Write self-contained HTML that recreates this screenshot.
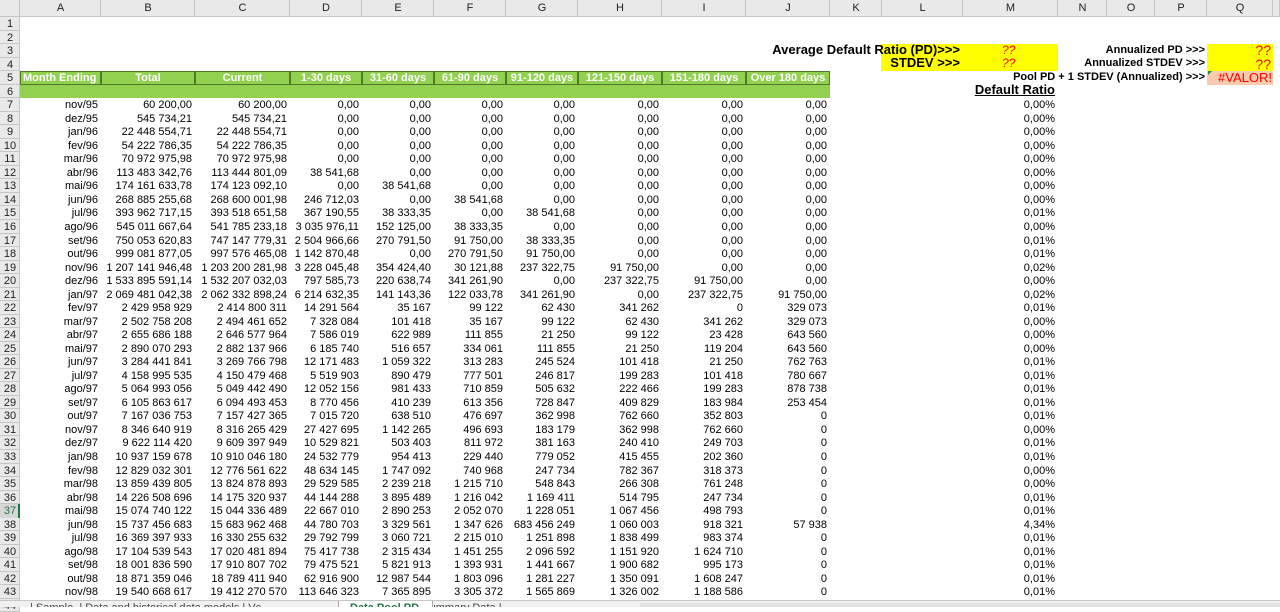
<!DOCTYPE html>
<html><head><meta charset="utf-8"><style>
*{margin:0;padding:0;box-sizing:border-box}
body{width:1280px;height:607px;overflow:hidden;background:#fff;font-family:"Liberation Sans",Arial,sans-serif;font-size:11px;color:#000;position:relative}
.g{display:grid;grid-template-columns:20px 81px 94px 95px 72px 72px 72px 72px 84px 84px 84px 52px 81px 95px 49px 48px 52px 66px 7px;grid-template-rows:17px repeat(44,13.54px);width:1280px}
.g>*{font-style:normal;font-weight:normal;white-space:nowrap;overflow:hidden;line-height:15px;text-align:right;padding-right:3px}
.g>b{grid-column:1;background:#e9e9e9;text-align:center;padding:0;box-shadow:inset -1px -1px 0 #c6c6c6;color:#222;line-height:14px}
.g>.h{background:#e9e9e9;text-align:center;padding:0;line-height:17px;box-shadow:inset -1px -1px 0 #c6c6c6;color:#222;font-size:11px}
.g>.m{grid-column:14}
.gr{background:#92d050;color:#fff;font-weight:bold!important;text-align:center!important;padding:0!important;border:1px solid #4f7a28;line-height:12.5px!important}
.ab{position:absolute;font-weight:bold;white-space:nowrap}
</style></head><body>
<div class="g">
<div class="h"></div><div class="h">A</div><div class="h">B</div><div class="h">C</div><div class="h">D</div><div class="h">E</div><div class="h">F</div><div class="h">G</div><div class="h">H</div><div class="h">I</div><div class="h">J</div><div class="h">K</div><div class="h">L</div><div class="h">M</div><div class="h">N</div><div class="h">O</div><div class="h">P</div><div class="h">Q</div><div class="h"></div>
<b>1</b><b>2</b><b>3</b><b>4</b>
<b>5</b><i class="gr" style="text-align:left!important;padding-left:2px!important">Month Ending</i><i class="gr">Total</i><i class="gr">Current</i><i class="gr">1-30 days</i><i class="gr">31-60 days</i><i class="gr">61-90 days</i><i class="gr">91-120 days</i><i class="gr">121-150 days</i><i class="gr">151-180 days</i><i class="gr">Over 180 days</i>
<b>6</b><i style="grid-column:2/12;background:#92d050"></i>
<b>7</b><i>nov/95</i><i>60 200,00</i><i>60 200,00</i><i>0,00</i><i>0,00</i><i>0,00</i><i>0,00</i><i>0,00</i><i>0,00</i><i>0,00</i><i class="m">0,00%</i>
<b>8</b><i>dez/95</i><i>545 734,21</i><i>545 734,21</i><i>0,00</i><i>0,00</i><i>0,00</i><i>0,00</i><i>0,00</i><i>0,00</i><i>0,00</i><i class="m">0,00%</i>
<b>9</b><i>jan/96</i><i>22 448 554,71</i><i>22 448 554,71</i><i>0,00</i><i>0,00</i><i>0,00</i><i>0,00</i><i>0,00</i><i>0,00</i><i>0,00</i><i class="m">0,00%</i>
<b>10</b><i>fev/96</i><i>54 222 786,35</i><i>54 222 786,35</i><i>0,00</i><i>0,00</i><i>0,00</i><i>0,00</i><i>0,00</i><i>0,00</i><i>0,00</i><i class="m">0,00%</i>
<b>11</b><i>mar/96</i><i>70 972 975,98</i><i>70 972 975,98</i><i>0,00</i><i>0,00</i><i>0,00</i><i>0,00</i><i>0,00</i><i>0,00</i><i>0,00</i><i class="m">0,00%</i>
<b>12</b><i>abr/96</i><i>113 483 342,76</i><i>113 444 801,09</i><i>38 541,68</i><i>0,00</i><i>0,00</i><i>0,00</i><i>0,00</i><i>0,00</i><i>0,00</i><i class="m">0,00%</i>
<b>13</b><i>mai/96</i><i>174 161 633,78</i><i>174 123 092,10</i><i>0,00</i><i>38 541,68</i><i>0,00</i><i>0,00</i><i>0,00</i><i>0,00</i><i>0,00</i><i class="m">0,00%</i>
<b>14</b><i>jun/96</i><i>268 885 255,68</i><i>268 600 001,98</i><i>246 712,03</i><i>0,00</i><i>38 541,68</i><i>0,00</i><i>0,00</i><i>0,00</i><i>0,00</i><i class="m">0,00%</i>
<b>15</b><i>jul/96</i><i>393 962 717,15</i><i>393 518 651,58</i><i>367 190,55</i><i>38 333,35</i><i>0,00</i><i>38 541,68</i><i>0,00</i><i>0,00</i><i>0,00</i><i class="m">0,01%</i>
<b>16</b><i>ago/96</i><i>545 011 667,64</i><i>541 785 233,18</i><i>3 035 976,11</i><i>152 125,00</i><i>38 333,35</i><i>0,00</i><i>0,00</i><i>0,00</i><i>0,00</i><i class="m">0,00%</i>
<b>17</b><i>set/96</i><i>750 053 620,83</i><i>747 147 779,31</i><i>2 504 966,66</i><i>270 791,50</i><i>91 750,00</i><i>38 333,35</i><i>0,00</i><i>0,00</i><i>0,00</i><i class="m">0,01%</i>
<b>18</b><i>out/96</i><i>999 081 877,05</i><i>997 576 465,08</i><i>1 142 870,48</i><i>0,00</i><i>270 791,50</i><i>91 750,00</i><i>0,00</i><i>0,00</i><i>0,00</i><i class="m">0,01%</i>
<b>19</b><i>nov/96</i><i>1 207 141 946,48</i><i>1 203 200 281,98</i><i>3 228 045,48</i><i>354 424,40</i><i>30 121,88</i><i>237 322,75</i><i>91 750,00</i><i>0,00</i><i>0,00</i><i class="m">0,02%</i>
<b>20</b><i>dez/96</i><i>1 533 895 591,14</i><i>1 532 207 032,03</i><i>797 585,73</i><i>220 638,74</i><i>341 261,90</i><i>0,00</i><i>237 322,75</i><i>91 750,00</i><i>0,00</i><i class="m">0,00%</i>
<b>21</b><i>jan/97</i><i>2 069 481 042,38</i><i>2 062 332 898,24</i><i>6 214 632,35</i><i>141 143,36</i><i>122 033,78</i><i>341 261,90</i><i>0,00</i><i>237 322,75</i><i>91 750,00</i><i class="m">0,02%</i>
<b>22</b><i>fev/97</i><i>2 429 958 929</i><i>2 414 800 311</i><i>14 291 564</i><i>35 167</i><i>99 122</i><i>62 430</i><i>341 262</i><i>0</i><i>329 073</i><i class="m">0,01%</i>
<b>23</b><i>mar/97</i><i>2 502 758 208</i><i>2 494 461 652</i><i>7 328 084</i><i>101 418</i><i>35 167</i><i>99 122</i><i>62 430</i><i>341 262</i><i>329 073</i><i class="m">0,00%</i>
<b>24</b><i>abr/97</i><i>2 655 686 188</i><i>2 646 577 964</i><i>7 586 019</i><i>622 989</i><i>111 855</i><i>21 250</i><i>99 122</i><i>23 428</i><i>643 560</i><i class="m">0,00%</i>
<b>25</b><i>mai/97</i><i>2 890 070 293</i><i>2 882 137 966</i><i>6 185 740</i><i>516 657</i><i>334 061</i><i>111 855</i><i>21 250</i><i>119 204</i><i>643 560</i><i class="m">0,00%</i>
<b>26</b><i>jun/97</i><i>3 284 441 841</i><i>3 269 766 798</i><i>12 171 483</i><i>1 059 322</i><i>313 283</i><i>245 524</i><i>101 418</i><i>21 250</i><i>762 763</i><i class="m">0,01%</i>
<b>27</b><i>jul/97</i><i>4 158 995 535</i><i>4 150 479 468</i><i>5 519 903</i><i>890 479</i><i>777 501</i><i>246 817</i><i>199 283</i><i>101 418</i><i>780 667</i><i class="m">0,01%</i>
<b>28</b><i>ago/97</i><i>5 064 993 056</i><i>5 049 442 490</i><i>12 052 156</i><i>981 433</i><i>710 859</i><i>505 632</i><i>222 466</i><i>199 283</i><i>878 738</i><i class="m">0,01%</i>
<b>29</b><i>set/97</i><i>6 105 863 617</i><i>6 094 493 453</i><i>8 770 456</i><i>410 239</i><i>613 356</i><i>728 847</i><i>409 829</i><i>183 984</i><i>253 454</i><i class="m">0,01%</i>
<b>30</b><i>out/97</i><i>7 167 036 753</i><i>7 157 427 365</i><i>7 015 720</i><i>638 510</i><i>476 697</i><i>362 998</i><i>762 660</i><i>352 803</i><i>0</i><i class="m">0,01%</i>
<b>31</b><i>nov/97</i><i>8 346 640 919</i><i>8 316 265 429</i><i>27 427 695</i><i>1 142 265</i><i>496 693</i><i>183 179</i><i>362 998</i><i>762 660</i><i>0</i><i class="m">0,00%</i>
<b>32</b><i>dez/97</i><i>9 622 114 420</i><i>9 609 397 949</i><i>10 529 821</i><i>503 403</i><i>811 972</i><i>381 163</i><i>240 410</i><i>249 703</i><i>0</i><i class="m">0,01%</i>
<b>33</b><i>jan/98</i><i>10 937 159 678</i><i>10 910 046 180</i><i>24 532 779</i><i>954 413</i><i>229 440</i><i>779 052</i><i>415 455</i><i>202 360</i><i>0</i><i class="m">0,01%</i>
<b>34</b><i>fev/98</i><i>12 829 032 301</i><i>12 776 561 622</i><i>48 634 145</i><i>1 747 092</i><i>740 968</i><i>247 734</i><i>782 367</i><i>318 373</i><i>0</i><i class="m">0,00%</i>
<b>35</b><i>mar/98</i><i>13 859 439 805</i><i>13 824 878 893</i><i>29 529 585</i><i>2 239 218</i><i>1 215 710</i><i>548 843</i><i>266 308</i><i>761 248</i><i>0</i><i class="m">0,00%</i>
<b>36</b><i>abr/98</i><i>14 226 508 696</i><i>14 175 320 937</i><i>44 144 288</i><i>3 895 489</i><i>1 216 042</i><i>1 169 411</i><i>514 795</i><i>247 734</i><i>0</i><i class="m">0,01%</i>
<b style="background:#d6d6d6;color:#217346;box-shadow:inset -2px 0 0 #217346">37</b><i>mai/98</i><i>15 074 740 122</i><i>15 044 336 489</i><i>22 667 010</i><i>2 890 253</i><i>2 052 070</i><i>1 228 051</i><i>1 067 456</i><i>498 793</i><i>0</i><i class="m">0,01%</i>
<b>38</b><i>jun/98</i><i>15 737 456 683</i><i>15 683 962 468</i><i>44 780 703</i><i>3 329 561</i><i>1 347 626</i><i>683 456 249</i><i>1 060 003</i><i>918 321</i><i>57 938</i><i class="m">4,34%</i>
<b>39</b><i>jul/98</i><i>16 369 397 933</i><i>16 330 255 632</i><i>29 792 799</i><i>3 060 721</i><i>2 215 010</i><i>1 251 898</i><i>1 838 499</i><i>983 374</i><i>0</i><i class="m">0,01%</i>
<b>40</b><i>ago/98</i><i>17 104 539 543</i><i>17 020 481 894</i><i>75 417 738</i><i>2 315 434</i><i>1 451 255</i><i>2 096 592</i><i>1 151 920</i><i>1 624 710</i><i>0</i><i class="m">0,01%</i>
<b>41</b><i>set/98</i><i>18 001 836 590</i><i>17 910 807 702</i><i>79 475 521</i><i>5 821 913</i><i>1 393 931</i><i>1 441 667</i><i>1 900 682</i><i>995 173</i><i>0</i><i class="m">0,01%</i>
<b>42</b><i>out/98</i><i>18 871 359 046</i><i>18 789 411 940</i><i>62 916 900</i><i>12 987 544</i><i>1 803 096</i><i>1 281 227</i><i>1 350 091</i><i>1 608 247</i><i>0</i><i class="m">0,01%</i>
<b>43</b><i>nov/98</i><i>19 540 668 617</i><i>19 412 270 570</i><i>113 646 323</i><i>7 365 895</i><i>3 305 372</i><i>1 565 869</i><i>1 326 002</i><i>1 188 586</i><i>0</i><i class="m">0,01%</i>
<b>44</b>
</div>

<div style="position:absolute;left:881px;top:44px;width:177px;height:27px;background:#ffff00"></div>
<div style="position:absolute;left:1207px;top:44px;width:66px;height:27px;background:#ffff00"></div>
<div style="position:absolute;left:1207px;top:71px;width:66px;height:14px;background:#f8cbad"></div>
<div style="position:absolute;left:1208px;top:71px;width:0;height:0;border-top:4px solid #1e8a3a;border-right:4px solid transparent"></div>

<div class="ab" style="right:320px;top:42px;font-size:13px;line-height:15px">Average Default Ratio (PD)&gt;&gt;&gt;</div>
<div class="ab" style="right:320px;top:55px;font-size:13px;line-height:15px">STDEV &gt;&gt;&gt;</div>
<div class="ab" style="left:1002px;top:43px;font-size:12px;line-height:14px;color:#ff0000;font-weight:normal;font-style:italic">??</div>
<div class="ab" style="left:1002px;top:56px;font-size:12px;line-height:14px;color:#ff0000;font-weight:normal;font-style:italic">??</div>
<div class="ab" style="right:75px;top:44px;font-size:11px;line-height:13px">Annualized PD &gt;&gt;&gt;</div>
<div class="ab" style="right:75px;top:57px;font-size:11px;line-height:13px">Annualized STDEV &gt;&gt;&gt;</div>
<div class="ab" style="right:75px;top:71px;font-size:11px;line-height:13px">Pool PD + 1 STDEV (Annualized) &gt;&gt;&gt;</div>
<div class="ab" style="right:9px;top:42px;font-size:14px;line-height:16px;color:#ff0000;font-weight:normal">??</div>
<div class="ab" style="right:9px;top:56px;font-size:14px;line-height:16px;color:#ff0000;font-weight:normal">??</div>
<div class="ab" style="right:8px;top:70px;font-size:13px;line-height:15px;color:#ff0000;font-weight:normal">#VALOR!</div>
<div class="ab" style="right:225px;top:82px;font-size:13px;line-height:15px;text-decoration:underline">Default Ratio</div>

<div style="position:absolute;left:0;top:600px;width:1280px;height:7px;background:#f0f0f0;border-top:1px solid #c6c6c6;overflow:hidden">
<div style="position:absolute;left:30px;top:1px;font-size:11px;line-height:12px;color:#444;white-space:nowrap">| Sample &nbsp;| Data and historical data models | Vc &nbsp;&nbsp;&nbsp;&nbsp;&nbsp;&nbsp;&nbsp;&nbsp;&nbsp;&nbsp;&nbsp;&nbsp;&nbsp;&nbsp;&nbsp;&nbsp;&nbsp;&nbsp;&nbsp;&nbsp;&nbsp;&nbsp;&nbsp;&nbsp;&nbsp; | Data historical Summary Data |</div>
<div style="position:absolute;left:338px;top:-1px;width:95px;height:8px;background:#fff;border-left:1px solid #aaa;border-right:1px solid #aaa"></div>
<div style="position:absolute;left:350px;top:1px;font-size:11px;line-height:12px;color:#217346;font-weight:bold">Data Pool PD</div>
<div style="position:absolute;left:640px;top:2px;width:640px;height:5px;background:#e2e2e2"></div>
</div>
</body></html>
